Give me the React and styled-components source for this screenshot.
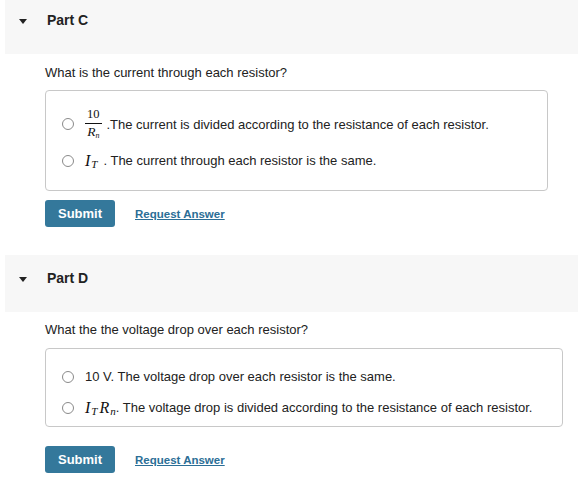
import React from "react";
import styled, { createGlobalStyle } from "styled-components";

const GlobalStyle = createGlobalStyle`
  body {
    margin: 0;
    background: #fff;
    font-family: "Liberation Sans", Arial, sans-serif;
    color: #333;
  }
`;

const Page = styled.div`
  margin-top: -3px;
`;

const Section = styled.section`
  & + & {
    margin-top: 28px;
  }
`;

const Header = styled.div`
  margin-left: 5px;
  height: 57px;
  background: #f7f7f7;
  display: flex;
  align-items: flex-start;
  padding-top: 16px;
  box-sizing: border-box;
`;

const Caret = styled.span`
  width: 0;
  height: 0;
  margin: 6px 0 0 14px;
  border-left: 4.5px solid transparent;
  border-right: 4.5px solid transparent;
  border-top: 5px solid #222;
`;

const Title = styled.h3`
  margin: 0 0 0 20px;
  font-size: 14px;
  font-weight: bold;
  color: #222;
  line-height: 15px;
`;

const Body = styled.div`
  padding-left: 45px;
`;

const Question = styled.p`
  margin: ${(p) => p.top}px 0 0;
  font-size: 13px;
  line-height: 16px;
  color: #222;
`;

const Choices = styled.div`
  width: ${(p) => p.width}px;
  box-sizing: border-box;
  margin-top: ${(p) => p.gap}px;
  border: 1px solid #c8c8c8;
  border-radius: 4px;
  padding: ${(p) => p.padTop}px 0 ${(p) => p.padBottom}px 16px;
`;

const Choice = styled.label`
  display: flex;
  align-items: center;
  height: ${(p) => p.height}px;
  font-size: 13px;
  color: #222;
`;

const Radio = styled.span`
  width: 10px;
  height: 10px;
  border: 1px solid #8a8a8a;
  border-radius: 50%;
  flex-shrink: 0;
  margin-right: 11px;
  background: #fff;
`;

const Math = styled.span`
  font-family: "Liberation Serif", "Times New Roman", serif;
  font-style: italic;
  font-size: 16px;
  color: #111;
  margin-right: ${(p) => p.space || 0}px;
`;

const Sub = styled.sub`
  font-size: 11px;
  vertical-align: -2px;
  margin: 0 ${(p) => p.after ?? 1}px 0 1px;
`;

const Frac = styled.span`
  display: inline-flex;
  flex-direction: column;
  align-items: center;
  font-family: "Liberation Serif", "Times New Roman", serif;
  color: #111;
  margin-right: 5px;
  line-height: 1;
`;

const Num = styled.span`
  font-size: 12.5px;
  padding: 0 2px 2px;
  border-bottom: 1px solid #111;
`;

const Den = styled.span`
  font-size: 13.5px;
  font-style: italic;
  padding-top: 1px;
`;

const SmallSub = styled.sub`
  font-size: 8px;
  vertical-align: -2px;
`;

const Actions = styled.div`
  display: flex;
  align-items: center;
  margin-top: ${(p) => p.top}px;
`;

const SubmitButton = styled.button`
  width: 70px;
  height: 27px;
  border: none;
  border-radius: 3px;
  background: #34789b;
  color: #fff;
  font-family: "Liberation Sans", Arial, sans-serif;
  font-size: 13px;
  font-weight: bold;
  padding: 0;
`;

const RequestLink = styled.a`
  margin-left: 20px;
  font-size: 11.5px;
  font-weight: bold;
  color: #2b6e96;
  text-decoration: underline;
  cursor: pointer;
`;

const Part = ({ title, question, children }) => (
  <Section>
    <Header>
      <Caret />
      <Title>{title}</Title>
    </Header>
    <Body>
      <Question top={question.top}>{question.text}</Question>
      {children}
      <Actions top={question.actionsTop}>
        <SubmitButton>Submit</SubmitButton>
        <RequestLink>Request Answer</RequestLink>
      </Actions>
    </Body>
  </Section>
);

export default function App() {
  return (
    <Page>
      <GlobalStyle />
      <Part
        title="Part C"
        question={{
          text: "What is the current through each resistor?",
          top: 11,
          actionsTop: 9,
        }}
      >
        <Choices width={503} gap={9} padTop={12} padBottom={14}>
          <Choice height={42}>
            <Radio />
            <Frac>
              <Num>10</Num>
              <Den>
                R<SmallSub>n</SmallSub>
              </Den>
            </Frac>
            .The current is divided according to the resistance of each
            resistor.
          </Choice>
          <Choice height={31}>
            <Radio />
            <Math space={5}>
              I<Sub>T</Sub>
            </Math>
            . The current through each resistor is the same.
          </Choice>
        </Choices>
      </Part>
      <Part
        title="Part D"
        question={{
          text: "What the the voltage drop over each resistor?",
          top: 10,
          actionsTop: 19,
        }}
      >
        <Choices width={518} gap={10} padTop={12} padBottom={3}>
          <Choice height={31}>
            <Radio />
            10 V. The voltage drop over each resistor is the same.
          </Choice>
          <Choice height={31}>
            <Radio />
            <Math>
              I<Sub after={2}>T</Sub>R<Sub after={0}>n</Sub>
            </Math>
            . The voltage drop is divided according to the resistance of each
            resistor.
          </Choice>
        </Choices>
      </Part>
    </Page>
  );
}
